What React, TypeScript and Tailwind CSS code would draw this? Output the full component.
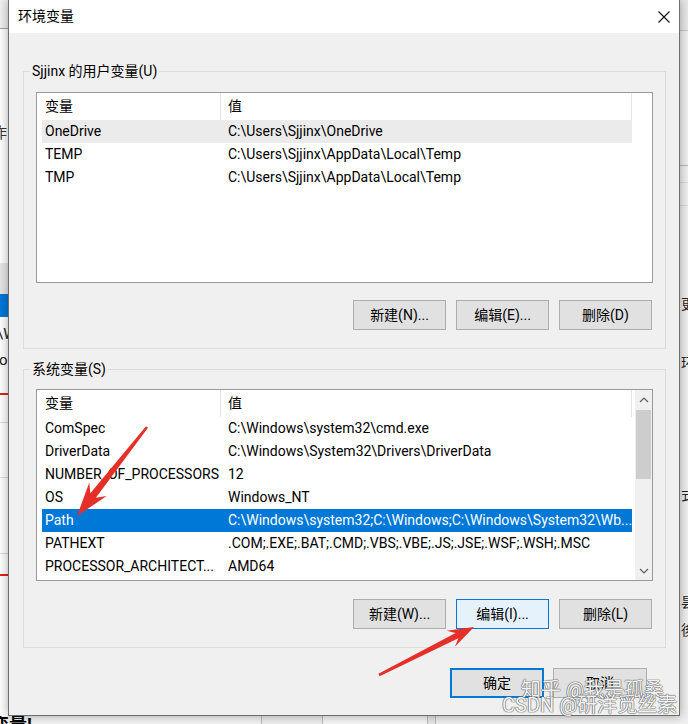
import React from "react";

const FONT = "font-[Roboto,'Noto_Sans_CJK_SC',sans-serif]";

type Row = { name: string; value: string };

const userRows: Row[] = [
  { name: "OneDrive", value: "C:\\Users\\Sjjinx\\OneDrive" },
  { name: "TEMP", value: "C:\\Users\\Sjjinx\\AppData\\Local\\Temp" },
  { name: "TMP", value: "C:\\Users\\Sjjinx\\AppData\\Local\\Temp" },
];

const sysRows: Row[] = [
  { name: "ComSpec", value: "C:\\Windows\\system32\\cmd.exe" },
  { name: "DriverData", value: "C:\\Windows\\System32\\Drivers\\DriverData" },
  { name: "NUMBER_OF_PROCESSORS", value: "12" },
  { name: "OS", value: "Windows_NT" },
  { name: "Path", value: "C:\\Windows\\system32;C:\\Windows;C:\\Windows\\System32\\Wb..." },
  { name: "PATHEXT", value: ".COM;.EXE;.BAT;.CMD;.VBS;.VBE;.JS;.JSE;.WSF;.WSH;.MSC" },
  { name: "PROCESSOR_ARCHITECT...", value: "AMD64" },
];

function ListRow({ row, state }: { row: Row; state?: "sel" | "inactive" }) {
  const cls =
    state === "sel"
      ? "bg-[#0078d7] text-white"
      : state === "inactive"
      ? "bg-[#ebebeb] text-black"
      : "text-black";
  return (
    <div className={`ml-[5px] flex h-[23px] w-[590px] shrink-0 items-center whitespace-nowrap ${cls}`}>
      <div className="w-[186px] shrink-0 overflow-hidden pl-[3px]">{row.name}</div>
      <div className="min-w-0 flex-1 overflow-hidden">{row.value}</div>
    </div>
  );
}

function ChevronUp() {
  return (
    <svg width="10" height="6" viewBox="0 0 10 6">
      <path d="M1 5 L5 1 L9 5" fill="none" stroke="#606060" strokeWidth="1.2" />
    </svg>
  );
}

function ChevronDown() {
  return (
    <svg width="10" height="6" viewBox="0 0 10 6">
      <path d="M1 1 L5 5 L9 1" fill="none" stroke="#606060" strokeWidth="1.2" />
    </svg>
  );
}

function ScrollBar() {
  return (
    <div className="flex w-[17px] shrink-0 flex-col bg-[#f0f0f0]">
      <div className="flex h-[19px] shrink-0 items-center justify-center">
        <ChevronUp />
      </div>
      <div className="mx-[1px] mt-[1px] h-[69px] shrink-0 bg-[#cdcdcd]" />
      <div className="flex-1" />
      <div className="flex h-[19px] shrink-0 items-center justify-center">
        <ChevronDown />
      </div>
    </div>
  );
}

function ListBox({
  rows,
  tall,
  selIndex,
  selKind,
  scroll,
}: {
  rows: Row[];
  tall?: boolean;
  selIndex: number;
  selKind: "sel" | "inactive";
  scroll?: boolean;
}) {
  return (
    <div className={`flex ${tall ? "h-[192px]" : "h-[191px]"} border border-[#999999] bg-white`}>
      <div className="flex min-w-0 flex-1 flex-col overflow-hidden">
        <div className="flex h-[27px] shrink-0">
          <div className="flex w-[184px] shrink-0 items-center border-r border-[#e5e5e5] pl-[8px]">变量</div>
          <div className="flex w-[411px] shrink-0 items-center border-r border-[#e5e5e5] pl-[7px]">值</div>
        </div>
        {rows.map((r, i) => (
          <ListRow key={r.name} row={r} state={i === selIndex ? selKind : undefined} />
        ))}
      </div>
      {scroll && <ScrollBar />}
    </div>
  );
}

function Btn({ label, variant = "normal", wide }: { label: string; variant?: "normal" | "focus" | "default"; wide?: boolean }) {
  const cls =
    variant === "focus"
      ? "border border-[#0078d7] bg-[#e5f1fb]"
      : variant === "default"
      ? "border-2 border-[#0078d7] bg-[#e1e1e1]"
      : "border border-[#adadad] bg-[#e1e1e1]";
  return (
    <div className={`flex h-[30px] ${wide ? "w-[94px]" : "w-[93px]"} items-center justify-center whitespace-nowrap text-black ${cls}`}>
      {label}
    </div>
  );
}

function Group({
  title,
  children,
  buttons,
  second,
}: {
  title: string;
  children: React.ReactNode;
  buttons: React.ReactNode;
  second?: boolean;
}) {
  return (
    <fieldset className={`ml-[14px] mr-[13px] border border-[#dcdcdc] ${second ? "mt-[10px]" : ""}`}>
      <legend className="ml-[6px] px-[2px] leading-[20px] text-black">{title}</legend>
      <div className={`px-[12px] ${second ? "pt-[10px]" : "pt-[11px]"} pb-[18px]`}>
        {children}
        <div className={`${second ? "mt-[18px]" : "mt-[17px]"} mr-[1px] flex justify-end gap-[10px]`}>{buttons}</div>
      </div>
    </fieldset>
  );
}

function Dialog() {
  return (
    <div className="absolute left-[8px] top-0 flex w-[672px] flex-col border-x border-b border-[#6e6e6e] bg-[#f0f0f0] shadow-[0_0_10px_rgba(0,0,0,0.35)]">
      <div className="flex h-[33px] shrink-0 items-center justify-between bg-white pl-[9px] pr-[9px]">
        <span className="text-black">环境变量</span>
        <svg width="12" height="12" viewBox="0 0 12 12">
          <path d="M0.5 0.5 L11.5 11.5 M11.5 0.5 L0.5 11.5" stroke="#111" strokeWidth="1.1" />
        </svg>
      </div>
      <div className="flex flex-col pt-[28px]">
        <Group
          title="Sjjinx 的用户变量(U)"
          buttons={
            <>
              <Btn label="新建(N)..." />
              <Btn label="编辑(E)..." />
              <Btn label="删除(D)" />
            </>
          }
        >
          <ListBox rows={userRows} selIndex={0} selKind="inactive" />
        </Group>
        <Group
          second
          title="系统变量(S)"
          buttons={
            <>
              <Btn label="新建(W)..." />
              <Btn label="编辑(I)..." variant="focus" />
              <Btn label="删除(L)" />
            </>
          }
        >
          <ListBox rows={sysRows} tall selIndex={4} selKind="sel" scroll />
        </Group>
        <div className="mt-[20px] flex justify-end gap-[9px] pb-[17px] pr-[32px]">
          <Btn label="确定" variant="default" wide />
          <Btn label="取消" wide />
        </div>
      </div>
    </div>
  );
}

function Background() {
  return (
    <>
      <div className="absolute left-0 top-0 flex h-[724px] w-[8px] flex-col overflow-hidden bg-white">
        <div className="h-[28px] shrink-0 bg-[#f0f0f0]" />
        <div className="h-[1px] shrink-0 bg-[#a0a0a0]" />
        <div className="h-[94px] shrink-0" />
        <div className="-ml-[8px] h-[20px] shrink-0 whitespace-nowrap text-[15px] leading-[20px] text-[#333]">作</div>
        <div className="h-[120px] shrink-0" />
        <div className="h-[31px] shrink-0 bg-[#e6e6e6]" />
        <div className="h-[23px] shrink-0 bg-[#0078d7]" />
        <div className="h-[8px] shrink-0" />
        <div className="-ml-[3px] h-[18px] shrink-0 whitespace-nowrap text-[15px] leading-[18px] text-[#222]">\W</div>
        <div className="h-[8px] shrink-0" />
        <div className="-ml-[1px] h-[18px] shrink-0 whitespace-nowrap text-[15px] leading-[18px] text-[#222]">o</div>
        <div className="h-[24px] shrink-0" />
        <div className="h-[2px] shrink-0 bg-[#e02020]" />
        <div className="h-[27px] shrink-0" />
        <div className="h-[1px] shrink-0 bg-[#dcdcdc]" />
        <div className="h-[54px] shrink-0" />
        <div className="h-[1px] shrink-0 bg-[#dcdcdc]" />
        <div className="h-[75px] shrink-0" />
        <div className="h-[1px] shrink-0 bg-[#dcdcdc]" />
        <div className="h-[20px] shrink-0" />
        <div className="h-[2px] shrink-0 bg-[#e02020]" />
        <div className="flex-1" />
      </div>
      <div className="absolute right-0 top-0 flex h-[724px] w-[8px] flex-col overflow-hidden bg-[#f0f0f0] text-[14px] leading-[20px] text-[#222]">
        <div className="h-[30px] shrink-0 bg-[#e9e9e9]" />
        <div className="h-[1px] shrink-0 bg-[#c8c8c8]" />
        <div className="h-[134px] shrink-0" />
        <div className="h-[1px] shrink-0 bg-[#b8b8b8]" />
        <div className="h-[16px] shrink-0" />
        <div className="h-[1px] shrink-0 bg-[#dcdcdc]" />
        <div className="h-[22px] shrink-0" />
        <div className="h-[1px] shrink-0 bg-[#dcdcdc]" />
        <div className="h-[88px] shrink-0" />
        <div className="h-[20px] shrink-0 whitespace-nowrap pl-[1px]">更</div>
        <div className="h-[39px] shrink-0" />
        <div className="h-[20px] shrink-0 whitespace-nowrap pl-[1px]">环</div>
        <div className="h-[112px] shrink-0" />
        <div className="h-[20px] shrink-0 whitespace-nowrap pl-[1px]">式</div>
        <div className="h-[87px] shrink-0" />
        <div className="h-[20px] shrink-0 whitespace-nowrap pl-[1px]">昙</div>
        <div className="h-[8px] shrink-0" />
        <div className="h-[20px] shrink-0 whitespace-nowrap pl-[1px]">後</div>
        <div className="flex-1" />
      </div>
      <div className="absolute bottom-0 left-0 flex h-[8px] w-[688px] overflow-hidden bg-[#f4f4f4]">
        <div className="-ml-[9px] w-[270px] shrink-0 whitespace-nowrap text-[18px] font-bold leading-[18px] text-black">变量!</div>
        <div className="w-[1px] shrink-0 bg-[#bdbdbd]" />
        <div className="w-[60px] shrink-0 bg-[#efefef]" />
        <div className="w-[1px] shrink-0 bg-[#bdbdbd]" />
        <div className="w-[104px] shrink-0 bg-[#f7f7f7]" />
        <div className="w-[1px] shrink-0 bg-[#bdbdbd]" />
        <div className="w-[7px] shrink-0 bg-[#e8e8e8]" />
        <div className="w-[1px] shrink-0 bg-[#bdbdbd]" />
        <div className="flex-1 bg-[#f0f0f0]" />
      </div>
    </>
  );
}

function Arrows() {
  return (
    <svg className="pointer-events-none absolute left-0 top-0" width="688" height="724" viewBox="0 0 688 724">
      <polygon
        points="148.0,427.8 95.85,497.7 106.7,496.0 77,516 89.3,482.4 90.35,493.3 146.0,426.2"
        fill="#e5302a"
      />
      <polygon
        points="379.6,676.2 458.4,638.3 454.9,646.7 474,627 446.7,630.7 455.6,632.9 378.4,673.8"
        fill="#e5302a"
      />
    </svg>
  );
}

function Watermark() {
  return (
    <>
      <div className="pointer-events-none absolute left-[521px] top-[678px] whitespace-nowrap text-[20px] leading-[24px] text-[#f2f2f2] [text-shadow:0_0_1px_#555,0_0_1px_#555,0_0_1px_#777]">
        知乎 @我是孤桑
      </div>
      <div className="pointer-events-none absolute left-[502px] top-[693px] whitespace-nowrap text-[20px] leading-[24px] text-[#f2f2f2] [text-shadow:0_0_1px_#555,0_0_1px_#555,0_0_1px_#777]">
        CSDN @研洋觅丝素
      </div>
    </>
  );
}

export default function App() {
  return (
    <div className={`relative h-[724px] w-[688px] overflow-hidden bg-[#f0f0f0] text-[14px] text-black ${FONT}`}>
      <Background />
      <Dialog />
      <Arrows />
      <Watermark />
    </div>
  );
}
